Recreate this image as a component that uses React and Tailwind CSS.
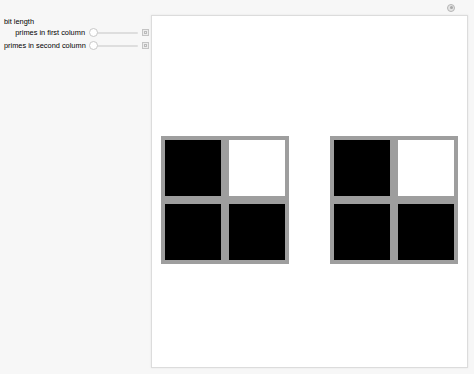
const cells = [true, false, true, true];

function Slider({ label }) {
  return (
    <div className="flex items-center h-[13px]">
      <div className="w-[85px] pl-[4px] text-right whitespace-nowrap">{label}</div>
      <div className="relative ml-[4px] w-[49px] h-[9px] flex items-center">
        <div className="absolute left-[4px] right-0 h-[2px] bg-[#dedede] rounded" />
        <div className="relative w-[9px] h-[9px] rounded-full bg-white border border-[#c8c8c8]" />
      </div>
      <div className="ml-[4px] w-[7px] h-[7px] border border-[#c4c4c4] bg-[#ececec] flex items-center justify-center">
        <div className="w-[3px] h-[3px] border border-[#bbb]" />
      </div>
    </div>
  );
}

function Board() {
  return (
    <div className="grid grid-cols-2 gap-[8px] p-[4px] bg-[#9e9e9e]">
      {cells.map((black, i) => (
        <div key={i} className={`w-[56px] h-[56px] ${black ? 'bg-black' : 'bg-white'}`} />
      ))}
    </div>
  );
}

export default function App() {
  return (
    <div
      className="w-[474px] h-[374px] bg-[#f7f7f7] flex text-[7.4px] text-black"
      style={{ fontFamily: '"Liberation Sans", Arial, sans-serif' }}
    >
      <div className="w-[151px] pt-[17px]">
        <div className="pl-[4px] h-[9px] leading-[9px]">bit length</div>
        <Slider label="primes in first column" />
        <Slider label="primes in second column" />
      </div>
      <div className="flex-1 flex flex-col">
        <div className="h-[15px] flex items-center justify-end pr-[19px]">
          <div className="w-[8px] h-[8px] rounded-full border border-[#b5b5b5] bg-[#e4e4e4] flex items-center justify-center">
            <div className="w-[3px] h-[3px] rounded-full bg-[#a8a8a8]" />
          </div>
        </div>
        <div className="flex-1 mr-[6px] mb-[6px] bg-white border border-[#dcdcdc] shadow-[0_0_2px_rgba(0,0,0,0.08)] flex justify-center items-start gap-[41px] pt-[120px]">
          <Board />
          <Board />
        </div>
      </div>
    </div>
  );
}
